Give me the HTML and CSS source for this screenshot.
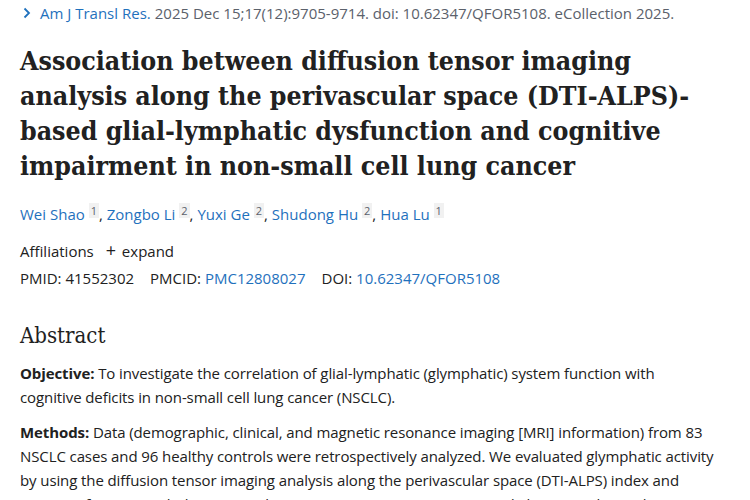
FILE: index.html
```html
<!DOCTYPE html>
<html>
<head>
<meta charset="utf-8">
<link rel="stylesheet" href="styles.css">
</head>
<body>
<main class="article">
  <div class="cite">
    <svg class="chev" width="8" height="12" viewBox="0 0 8 12"><path d="M1.5 1.5 L6 6 L1.5 10.5" fill="none" stroke="#1f71bd" stroke-width="1.8"/></svg>
    <a class="link">Am J Transl Res.</a> <span class="gray">2025 Dec 15;17(12):9705-9714. doi: 10.62347/QFOR5108. eCollection 2025.</span>
  </div>
  <h1 class="title">Association between diffusion tensor imaging analysis along the perivascular space (DTI-ALPS)-based glial-lymphatic dysfunction and cognitive impairment in non-small cell lung cancer</h1>
  <div class="authors">
    <a class="link">Wei Shao</a> <sup class="ref">1</sup>, <a class="link">Zongbo Li</a> <sup class="ref">2</sup>, <a class="link">Yuxi Ge</a> <sup class="ref">2</sup>, <a class="link">Shudong Hu</a> <sup class="ref">2</sup>, <a class="link">Hua Lu</a> <sup class="ref">1</sup>
  </div>
  <div class="affil">Affiliations <span class="expand"><span class="plus">+</span> expand</span></div>
  <div class="ids">
    <span>PMID: 41552302</span>
    <span>PMCID: <a class="link">PMC12808027</a></span>
    <span>DOI: <a class="link">10.62347/QFOR5108</a></span>
  </div>
  <h2 class="abs-title">Abstract</h2>
  <p class="para"><b>Objective:</b> To investigate the correlation of glial-lymphatic (glymphatic) system function with<br>cognitive deficits in non-small cell lung cancer (NSCLC).</p>
  <p class="para"><b>Methods:</b> Data (demographic, clinical, and magnetic resonance imaging [MRI] information) from 83<br>NSCLC cases and 96 healthy controls were retrospectively analyzed. We evaluated glymphatic activity<br>by using the diffusion tensor imaging analysis along the perivascular space (DTI-ALPS) index and<br>cognitive function with the Montreal Cognitive Assessment (MoCA), Medial Temporal Atrophy (MTA) scale.</p>
</main>
</body>
</html>
```
FILE: styles.css
```css
html, body { margin: 0; padding: 0; background: #fff; }
body { font-family: "Open Sans", sans-serif; color: #212121; }
.article { padding: 0 20px; width: 714px; }
.link { color: #1f71bd; text-decoration: none; }
.cite { font-size: 15px; line-height: 20px; padding-top: 3px; display: flex; align-items: center; white-space: nowrap; }
.cite .chev { margin: 0 9px 0 3px; }
.cite .gray { color: #5b616b; margin-left: 4px; }
.title { font-family: "DejaVu Serif", serif; font-stretch: condensed; font-weight: bold; font-size: 26.5px; line-height: 35px; margin: 20px 0 0 0; color: #212121; width: 690px; }
.authors { font-size: 15px; line-height: 22px; margin-top: 20px; }
.ref { font-size: 11px; background: #f1f1f1; color: #5b616b; padding: 0 2px; vertical-align: 5px; line-height: 12px; }
.affil { font-size: 15px; line-height: 22px; margin-top: 14px; }
.expand { margin-left: 8px; }
.plus { font-size: 18px; margin-right: 2px; }
.ids { font-size: 15px; line-height: 22px; margin-top: 5px; display: flex; gap: 16px; }
.abs-title { font-family: "DejaVu Serif", serif; font-stretch: condensed; font-weight: normal; font-size: 22px; line-height: 28px; margin: 33px 0 0 0; }
.para { font-size: 15px; line-height: 24px; margin: 11px 0 0 0; letter-spacing: -0.1px; }
.para + .para { margin-top: 11px; }
.para b { font-weight: 700; }
```
